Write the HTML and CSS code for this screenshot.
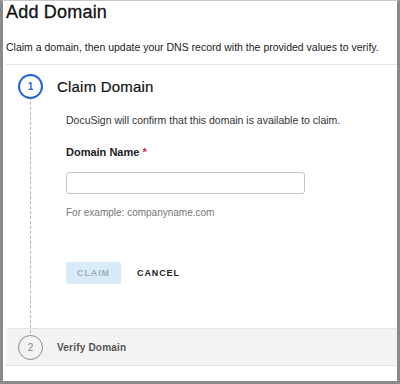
FILE: index.html
```html
<!DOCTYPE html>
<html lang="en">
<head>
  <meta charset="UTF-8" />
  <title>Add Domain</title>
  <link rel="stylesheet" href="styles.css">
</head>
<body>
  <div class="frame">
    <h1 class="title">Add Domain</h1>
    <p class="intro">Claim a domain, then update your DNS record with the provided values to verify.</p>

    <div class="steps">
      <div class="step active">
        <div class="step-head">
          <span class="num">1</span>
          <span class="step-title">Claim Domain</span>
        </div>
        <div class="step-body">
          <p class="desc">DocuSign will confirm that this domain is available to claim.</p>
          <label class="label">Domain Name <span class="req">*</span></label>
          <input class="field" type="text">
          <p class="hint">For example: companyname.com</p>
          <div class="actions">
            <button class="btn claim">CLAIM</button>
            <button class="btn cancel">CANCEL</button>
          </div>
        </div>
      </div>

      <div class="step pending">
        <span class="num">2</span>
        <span class="step-title">Verify Domain</span>
      </div>
    </div>
  </div>
</body>
</html>
```

FILE: styles.css
```css
html, body {
  margin: 0;
  padding: 0;
  background: #fff;
}
.frame {
  box-sizing: border-box;
  width: 400px;
  height: 384px;
  border: 3px solid #8a8a8a;
  border-top: 1px solid #c8c8c8;
  padding: 0 0 0 3px;
  font-family: "Liberation Sans", Arial, sans-serif;
  color: #222;
  overflow: hidden;
}
.title {
  margin: 0;
  font-weight: normal;
  font-size: 18px;
  line-height: 23px;
  letter-spacing: 0.2px;
  color: #111;
  -webkit-text-stroke: 0.3px #111;
}
.intro {
  margin: 16px 0 0 0;
  font-size: 10.5px;
  line-height: 14px;
  color: #222;
}
.steps {
  margin-top: 10px;
  border-top: 1px solid #e3e3e3;
}
.step-head {
  display: flex;
  align-items: center;
  height: 42px;
}
.num {
  box-sizing: border-box;
  width: 25px;
  height: 25px;
  margin-left: 12px;
  border: 2px solid #2463d6;
  border-radius: 50%;
  display: flex;
  justify-content: center;
  align-items: center;
  font-size: 10px;
  font-weight: bold;
  color: #2463d6;
  position: relative;
  z-index: 1;
  background: #fff;
}
.step-title {
  margin-left: 14px;
  font-size: 15px;
  letter-spacing: 0.2px;
  color: #111;
  -webkit-text-stroke: 0.2px #111;
}
.step.active {
  position: relative;
}
.step.active::before {
  content: '';
  position: absolute;
  left: 24px;
  top: 32px;
  bottom: -10px;
  border-left: 1px dashed #b5b5b5;
}
.step-body {
  padding: 6px 0 44px 60px;
}
.desc {
  margin: 0;
  font-size: 10.5px;
  line-height: 14px;
  color: #333;
}
.label {
  display: block;
  margin-top: 18px;
  font-size: 11px;
  line-height: 14px;
  font-weight: bold;
  color: #222;
}
.req {
  color: #d0262c;
}
.field {
  display: block;
  box-sizing: border-box;
  width: 239px;
  height: 22px;
  margin: 13px 0 0 0;
  border: 1px solid #c6c6c6;
  border-radius: 3px;
}
.hint {
  margin: 13px 0 0 0;
  font-size: 10px;
  line-height: 12px;
  color: #777;
}
.actions {
  display: flex;
  gap: 5px;
  margin-top: 43px;
}
.btn {
  border: none;
  height: 22px;
  padding: 0 11px;
  font-family: "Liberation Sans", Arial, sans-serif;
  font-size: 9px;
  font-weight: bold;
  letter-spacing: 0.9px;
  border-radius: 2px;
}
.btn.claim {
  width: 55px;
  background: #d7ebf9;
  color: #a3adb5;
}
.btn.cancel {
  background: transparent;
  color: #222;
}
.step.pending {
  display: flex;
  align-items: center;
  height: 36px;
  background: #f3f3f3;
  border-top: 1px solid #e6e6e6;
  border-bottom: 1px solid #e3e3e3;
}
.step.pending .num {
  border-color: #8c8c8c;
  border-width: 1.5px;
  color: #888;
  font-weight: normal;
  background: #f3f3f3;
}
.step.pending .step-title {
  font-size: 10px;
  font-weight: bold;
  letter-spacing: 0.2px;
  color: #555;
  -webkit-text-stroke: 0;
}
```
